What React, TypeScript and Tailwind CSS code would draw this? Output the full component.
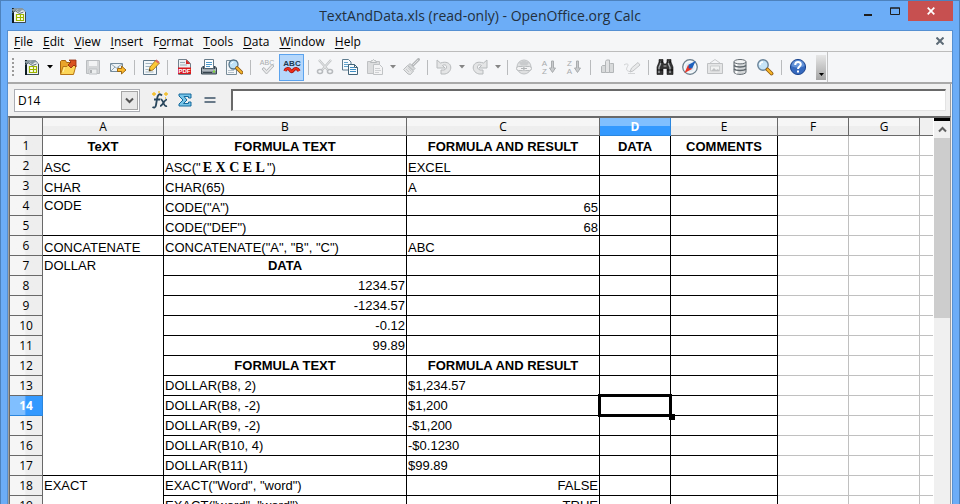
import type { ReactNode } from "react";

type Cell = { text?: ReactNode; align?: string };

type Row = {
  n: number;
  a?: { text: string; span?: number; className?: string };
  b?: Cell;
  c?: Cell;
  d?: Cell;
  e?: Cell;
  low?: boolean;
};

const head = "text-center font-bold";

const rows: Row[] = [
  {
    n: 1,
    a: { text: "TeXT", className: "text-center font-bold align-bottom pt-0" },
    b: { text: "FORMULA TEXT", align: head },
    c: { text: "FORMULA AND RESULT", align: head },
    d: { text: "DATA", align: head },
    e: { text: "COMMENTS", align: head },
  },
  {
    n: 2,
    low: true,
    a: { text: "ASC", className: "align-bottom pt-0 leading-[14px]" },
    b: {
      text: (
        <>
          ASC("<b className="mx-0.5 font-['Liberation_Serif',serif] text-[14px]">E X C E L</b>")
        </>
      ),
    },
    c: { text: "EXCEL" },
  },
  {
    n: 3,
    low: true,
    a: { text: "CHAR", className: "align-bottom pt-0 leading-[14px]" },
    b: { text: "CHAR(65)" },
    c: { text: "A" },
  },
  {
    n: 4,
    low: true,
    a: { text: "CODE", span: 2, className: "align-top pt-0.5" },
    b: { text: 'CODE("A")' },
    c: { text: "65", align: "text-right" },
  },
  { n: 5, low: true, b: { text: 'CODE("DEF")' }, c: { text: "68", align: "text-right" } },
  {
    n: 6,
    low: true,
    a: { text: "CONCATENATE", className: "align-bottom pt-0 leading-[14px]" },
    b: { text: 'CONCATENATE("A", "B", "C")' },
    c: { text: "ABC" },
  },
  { n: 7, a: { text: "DOLLAR", span: 11, className: "align-top pt-0.5" }, b: { text: "DATA", align: head } },
  { n: 8, b: { text: "1234.57", align: "text-right" } },
  { n: 9, b: { text: "-1234.57", align: "text-right" } },
  { n: 10, b: { text: "-0.12", align: "text-right" } },
  { n: 11, b: { text: "99.89", align: "text-right" } },
  { n: 12, b: { text: "FORMULA TEXT", align: head }, c: { text: "FORMULA AND RESULT", align: head } },
  { n: 13, b: { text: "DOLLAR(B8, 2)" }, c: { text: "$1,234.57" } },
  { n: 14, b: { text: "DOLLAR(B8, -2)" }, c: { text: "$1,200" } },
  { n: 15, b: { text: "DOLLAR(B9, -2)" }, c: { text: "-$1,200" } },
  { n: 16, b: { text: "DOLLAR(B10, 4)" }, c: { text: "-$0.1230" } },
  { n: 17, b: { text: "DOLLAR(B11)" }, c: { text: "$99.89" } },
  {
    n: 18,
    a: { text: "EXACT", span: 2, className: "align-top pt-0.5" },
    b: { text: 'EXACT("Word", "word")' },
    c: { text: "FALSE", align: "text-right" },
  },
  { n: 19, b: { text: 'EXACT("word", "word")' }, c: { text: "TRUE", align: "text-right" } },
];

const menus = ["File", "Edit", "View", "Insert", "Format", "Tools", "Data", "Window", "Help"];
const mnemonics: Record<string, number> = { Format: 1 };

const Icon = ({ children }: { children: ReactNode }) => (
  <svg width="18" height="18" viewBox="0 0 18 18" fill="none" aria-hidden="true">
    {children}
  </svg>
);

const CalcIcon = () => (
  <Icon>
    <path d="M3.500 3v13.500h12V6l-3-3.500z" fill="#eef3f5" stroke="#7b8a92" />
    <path d="M15.500 6v10.500H3" stroke="#3a4a54" />
    <path d="M3 2v15" stroke="#0c1a22" strokeWidth="2" />
    <path d="M1.500 3.500l4-1.500 2 1.500L11 2l3.500 2-3 .5-2 2-3-2-3 1.500z" fill="#8b9aa2" />
    <path d="M2 6.500l3.500-1.500 4 2.500 4-1.500" stroke="#5c6c75" />
    <path d="M6.500 8.500h7v6h-7zM10.500 8v7M6 11.500h8" fill="#fffff0" stroke="#9cb400" strokeWidth="1.200" />
  </Icon>
);

const OpenIcon = () => (
  <Icon>
    <path d="M1.500 15.500v-12l1-1h4l1 2h7v11z" fill="#e9a52b" stroke="#a8660f" />
    <path d="M1.500 16.500l2.500-8h4l1-1h8l-2.500 9z" fill="#fcd659" stroke="#b87515" />
    <path d="M4 14l1.500-4.500" stroke="#fff0a8" />
    <path d="M9 7l3-3-2-2h7v7l-2-2-3 3z" fill="#d9531e" stroke="#8e2a0a" strokeWidth=".8" />
  </Icon>
);

const SaveIcon = () => (
  <Icon>
    <path d="M2.500 2.500h13v13h-13z" fill="#d4d6d8" stroke="#b9bcbf" />
    <path d="M5 3h8v5H5z" fill="#f2f3f4" />
    <path d="M5 11h8v5H5z" fill="#eceeef" stroke="#bfc2c5" />
    <path d="M7 12v3" stroke="#aeb1b4" strokeWidth="2" />
  </Icon>
);

const MailIcon = () => (
  <Icon>
    <path d="M1.500 5.500h12v8h-12z" fill="#edf3f7" stroke="#758b9c" />
    <path d="M2 6l5.500 4L13 6M2 13l4-4M13 13l-4-4" stroke="#8a9daa" strokeWidth=".9" />
    <path d="M8.500 10.500h4v-2.500l4.500 4-4.500 4v-2.500h-4z" fill="#fcb82b" stroke="#95610b" strokeWidth=".9" />
  </Icon>
);

const EditIcon = () => (
  <Icon>
    <path d="M1.500 2.500h13v14h-13z" fill="#f4f8fa" stroke="#61798a" />
    <path d="M3.500 5.500h7M3.500 8.500h5M3.500 11.500h3M3.500 14h8" stroke="#a2b5c1" />
    <path d="M7 13l1-4 6-7 3.500 3-6.500 7z" fill="#fbc936" stroke="#936412" strokeWidth=".8" />
    <path d="M13 3l1.500-1.500L17.500 4 16 5.500z" fill="#dc6a61" />
    <path d="M7 13l.5-2 1.500 1.200z" fill="#222" />
  </Icon>
);

const PdfIcon = () => (
  <Icon>
    <path d="M3.500 1.500h8l4 4v11h-12z" fill="#edf1f4" stroke="#71818d" />
    <path d="M11 1.500V6h4.500z" fill="#d22b2b" />
    <path d="M5 4.500h5M5 7h7" stroke="#9cadb8" />
    <path d="M3 9.500h13v6.500H3z" fill="#d81920" />
    <text x="9.500" y="15" textAnchor="middle" fontSize="6" fontWeight="700" fill="#fff" fontFamily="Liberation Sans">
      PDF
    </text>
  </Icon>
);

const PrintIcon = () => (
  <Icon>
    <path d="M4.500 1.500h9v9h-9z" fill="#fff" stroke="#667b89" />
    <path d="M6 4.500h6M6 6.500h6M6 8.500h4" stroke="#4d98c8" />
    <path d="M1.500 10l2-2v3h11V8l2 2v6h-15z" fill="#87919a" stroke="#374650" />
    <path d="M2 12h14" stroke="#d8dee1" />
    <path d="M3 14.500h9" stroke="#37444e" />
    <path d="M13 13.500h2" stroke="#7fdb38" strokeWidth="2" />
  </Icon>
);

const PreviewIcon = () => (
  <Icon>
    <path d="M1.500 2.500h10v14h-10z" fill="#f5f7f9" stroke="#788c99" />
    <path d="M3 12.500h6M3 14.500h6" stroke="#b4c1ca" />
    <circle cx="8.500" cy="6.500" r="4.500" fill="#bee2f8" stroke="#537389" strokeWidth="1.300" />
    <path d="M6 6a3 3 0 012.500-2" stroke="#fff" />
    <path d="M12 10l4.500 4.500" stroke="#8c5912" strokeWidth="3.600" strokeLinecap="round" />
    <path d="M12 10l4.500 4.500" stroke="#f4b52c" strokeWidth="2" strokeLinecap="round" />
  </Icon>
);

const SpellIcon = () => (
  <Icon>
    <text x="9" y="7" textAnchor="middle" fontSize="7" fill="#a9acae" fontFamily="Liberation Sans">
      ABC
    </text>
    <path d="M4 11l2-1.500 2.500 3L14 6.500l2 1.500-7.500 8z" fill="#e6e7e8" stroke="#b4b7ba" />
  </Icon>
);

const AutoSpellIcon = () => (
  <Icon>
    <text x="9" y="8" textAnchor="middle" fontSize="8" fontWeight="700" fill="#203a51" fontFamily="Liberation Sans">
      ABC
    </text>
    <path d="M2 13c1-3 4-3 5-1s2 2 3.500 0 4-2 5.500 1" stroke="#981515" strokeWidth="3.400" />
    <path d="M2 13c1-3 4-3 5-1s2 2 3.500 0 4-2 5.500 1" stroke="#ef2c18" strokeWidth="2" />
  </Icon>
);

const CutIcon = () => (
  <Icon>
    <path d="M3 2l9 10M15 2L6 12" stroke="#c0c3c5" strokeWidth="2.400" />
    <path d="M3 2l9 10M15 2L6 12" stroke="#e7e8e9" />
    <ellipse cx="4" cy="13.500" rx="2.500" ry="2" stroke="#b8bbbe" strokeWidth="1.600" />
    <ellipse cx="14" cy="13.500" rx="2.500" ry="2" stroke="#b8bbbe" strokeWidth="1.600" />
  </Icon>
);

const CopyIcon = () => (
  <Icon>
    <path d="M1.500 1.500h6l2.500 2.500v8H1.500z" fill="#f8fbfd" stroke="#5e7c90" />
    <path d="M3 4.500h4M3 6.500h5M3 8.500h5" stroke="#63a4cd" />
    <path d="M7.500 6.500h6l3 3v7h-9z" fill="#f8fbfd" stroke="#426479" />
    <path d="M9 9.500h4M9 11.500h6M9 13.500h6" stroke="#3f8fc4" />
    <path d="M13.500 6.500v3h3" stroke="#426479" />
  </Icon>
);

const PasteIcon = () => (
  <Icon>
    <path d="M1.500 3.500h12v12h-12z" fill="#dcddde" stroke="#bfc1c3" />
    <path d="M4.500 4.500l1-2h1l1-1 1 1h1l1 2z" fill="#eee" stroke="#b5b8ba" />
    <path d="M7.500 6.500h6l3 3v7h-9z" fill="#f4f4f5" stroke="#c0c3c5" />
    <path d="M9 10.500h5M9 12.500h6M9 14.500h4" stroke="#cfd1d3" />
  </Icon>
);

const BrushIcon = () => (
  <Icon>
    <path d="M16.500 1.500l-6 6" stroke="#b4b7b9" strokeWidth="3" strokeLinecap="round" />
    <path d="M16 2l-5 5" stroke="#e0e1e2" />
    <path d="M8 5.500l5 5-2 2-5-5z" fill="#d6d8d9" stroke="#b9bcbe" />
    <path d="M5.500 7.500l6 5.500-3 3.500-2.500-.5-4.500-4.500z" fill="#e3e4e5" stroke="#b9bcbe" />
    <path d="M4 11l3 3M6 9.500l3.500 4" stroke="#c6c8ca" />
  </Icon>
);

const undoPath = "M2 2v8h8L7.500 7.500c4-2.500 6 3 1.500 4.500H6v4h4c9-2 7.500-15-4.500-11z";

const UndoIcon = () => (
  <Icon>
    <path d={undoPath} fill="#e4e5e6" stroke="#b7babc" />
  </Icon>
);

const RedoIcon = () => (
  <Icon>
    <path d={undoPath} transform="matrix(-1 0 0 1 18 0)" fill="#e4e5e6" stroke="#b7babc" />
  </Icon>
);

const GlobeIcon = () => (
  <Icon>
    <circle cx="9" cy="9" r="7" fill="#dfe0e1" stroke="#bfc2c4" />
    <path d="M4 4.500c3-2 7-2 10 0l-2 3H6zM3 9h3l1 2-2 1z" fill="#c9cbcd" />
    <rect x="1.500" y="8.500" width="8" height="4" rx="2" fill="#f2f2f3" stroke="#babdbf" />
    <rect x="8.500" y="8.500" width="8" height="4" rx="2" fill="#f2f2f3" stroke="#babdbf" />
    <path d="M6 10.500h6" stroke="#b0b3b5" />
  </Icon>
);

const SortIcon = ({ top, bottom }: { top: string; bottom: string }) => (
  <Icon>
    <text x="4.500" y="8" textAnchor="middle" fontSize="8" fill="#a8abad" fontFamily="Liberation Sans">
      {top}
    </text>
    <text x="4.500" y="16" textAnchor="middle" fontSize="8" fill="#a8abad" fontFamily="Liberation Sans">
      {bottom}
    </text>
    <path d="M11.500 3h2v7h2l-3 4.500-3-4.500h2z" fill="#c9cbcd" stroke="#a9acae" />
  </Icon>
);

const ChartIcon = () => (
  <Icon>
    <path d="M3.500 8.500l1-1h3v7h-4z" fill="#d8dadb" stroke="#b3b6b8" />
    <path d="M7.500 3.500l1-1.500h3v12.500h-4z" fill="#e2e3e4" stroke="#b3b6b8" />
    <path d="M11.500 6.500l1-1h3v9h-4z" fill="#d8dadb" stroke="#b3b6b8" />
  </Icon>
);

const DrawIcon = () => (
  <Icon>
    <path d="M1 7c3-2 5-1 3.500 1.500S3 13 7 13.500" stroke="#cfd1d3" />
    <path d="M7 14l1.500-4L15 4.500 17 7l-7 6z" fill="#e9eaeb" stroke="#c3c5c7" />
    <path d="M5 15.500h7" stroke="#d3d5d7" />
  </Icon>
);

const FindIcon = () => (
  <Icon>
    <path d="M3 1.500h4V4l1 2h2l1-2V1.500h4V4l2 5v7.500h-6v-6H7v6H1V9l2-5z" fill="#343434" stroke="#111" strokeWidth=".6" />
    <path d="M4.500 3v3L3 9.500V15M12.500 3v3L14 9.500V15" stroke="#a9adaf" strokeWidth="1.300" />
    <path d="M7.500 8h3" stroke="#888" strokeWidth="1.500" />
    <path d="M1 12h6M11 12h6M3 4h4M11 4h4" stroke="#050505" />
  </Icon>
);

const NavigatorIcon = () => (
  <Icon>
    <circle cx="9" cy="9" r="7.300" fill="#e4edf3" stroke="#6b7d8a" strokeWidth="1.200" />
    <circle cx="9" cy="9" r="5.500" stroke="#fff" />
    <path d="M14.500 3l-3.500 8-4-4z" fill="#1d60bd" />
    <path d="M3.500 15L7 7l4 4z" fill="#e83528" />
    <path d="M15 3L9 11 7 9z" fill="#1d60bd" />
  </Icon>
);

const GalleryIcon = () => (
  <Icon>
    <path d="M4 5l5-3.500L14 5" stroke="#c8cacc" />
    <path d="M1.500 5.500h15v10h-15z" fill="#e4e5e6" stroke="#bfc1c3" />
    <path d="M4.500 8h9v5h-9z" fill="#f1f2f2" stroke="#cbcdce" />
    <path d="M5 13l3-3 2 2 2-1 1.500 2z" fill="#bfc1c3" />
  </Icon>
);

const DatabaseIcon = () => (
  <Icon>
    <path d="M3 4v10.500c2 2.500 10 2.500 12 0V4z" fill="#d4d7d9" stroke="#5e666c" />
    <path d="M5.500 5.500v10" stroke="#fff" strokeWidth="2" />
    <path d="M3 7.500c2 2 10 2 12 0M3 11c2 2 10 2 12 0" stroke="#5e666c" strokeWidth="1.300" />
    <ellipse cx="9" cy="3.700" rx="6" ry="2.200" fill="#f3f4f5" stroke="#636b71" />
  </Icon>
);

const ZoomIcon = () => (
  <Icon>
    <circle cx="7" cy="7" r="5.200" fill="#c6e4f8" stroke="#698399" strokeWidth="1.400" />
    <path d="M4 7a3 3 0 013-3" stroke="#fff" strokeWidth="1.500" />
    <path d="M11.500 11.500l4 4" stroke="#87520c" strokeWidth="3.800" strokeLinecap="round" />
    <path d="M11.500 11.500l4 4" stroke="#f8b62a" strokeWidth="2.200" strokeLinecap="round" />
  </Icon>
);

const HelpIcon = () => (
  <Icon>
    <circle cx="9" cy="9" r="7.600" fill="#3569be" stroke="#1d468f" />
    <path d="M2.500 8a6.500 6 0 0113 0c-4 2-9 2-13 0z" fill="#6493d8" />
    <path d="M6.200 7c0-4 5.800-3.800 5.600-.5C11.700 8.500 9 8.500 9 11M9 12.500v2" stroke="#fff" strokeWidth="2" />
  </Icon>
);

const Tool = ({ label, active, children }: { label: string; active?: boolean; children: ReactNode }) => (
  <button
    type="button"
    aria-label={label}
    className={`flex h-[27px] w-[25px] shrink-0 items-center justify-center ${
      active ? "border border-[#5ba3ee] bg-[#b5d7fb]" : ""
    }`}
  >
    {children}
  </button>
);

const Arrow = ({ label, dark }: { label: string; dark?: boolean }) => (
  <button type="button" aria-label={label} className="flex h-[27px] w-[11px] shrink-0 items-center justify-center">
    <svg width="6" height="4" viewBox="0 0 6 4" aria-hidden="true">
      <path d="M0 0h6L3 3.500z" fill={dark ? "#000" : "#858585"} />
    </svg>
  </button>
);

const Sep = () => (
  <span className="flex w-2 shrink-0 justify-center">
    <span className="h-[15px] w-px bg-[#b9bbbd]" />
  </span>
);

const TitleBar = () => (
  <header className="flex h-[29px] shrink-0 items-start bg-[#6cadf7]">
    <div className="flex w-[140px] items-center pt-[5px] pl-[9px]">
      <CalcIcon />
    </div>
    <h1 className="flex-1 text-center text-[14px] leading-[29px] whitespace-nowrap text-[#23303d]">
      TextAndData.xls (read-only) - OpenOffice.org Calc
    </h1>
    <div className="flex w-[140px] justify-end pr-1.5">
      <button type="button" aria-label="Minimize" className="flex h-[21px] w-7 items-center justify-center">
        <svg width="10" height="10" viewBox="0 0 10 10" aria-hidden="true">
          <path d="M1 7h8v2H1z" fill="#1e1e1e" />
        </svg>
      </button>
      <button type="button" aria-label="Maximize" className="flex h-[20px] w-[26px] items-center justify-center">
        <svg width="10" height="8" viewBox="0 0 10 8" fill="none" aria-hidden="true">
          <path d="M.5 1h9v6.500h-9zM0 1h10" stroke="#1e1e1e" />
        </svg>
      </button>
      <button type="button" aria-label="Close" className="flex h-5 w-[45px] items-center justify-center bg-[#c75050]">
        <svg width="8" height="8" viewBox="0 0 8 8" aria-hidden="true">
          <path d="M.7.7l6.600 6.600M7.300.7L.7 7.300" stroke="#fff" strokeWidth="1.700" />
        </svg>
      </button>
    </div>
  </header>
);

const MenuBar = () => (
  <nav className="flex h-[21px] shrink-0 items-center justify-between border-b border-[#bcbcbc] bg-[#f5f6f7] pr-2 pl-1.5 text-[12px] text-black">
    <div className="flex gap-2.5 pt-px">
      {menus.map((m) => {
        const at = mnemonics[m] ?? 0;
        return (
          <button key={m} type="button" className="leading-5">
            {m.slice(0, at)}
            <span className="underline underline-offset-2">{m[at]}</span>
            {m.slice(at + 1)}
          </button>
        );
      })}
    </div>
    <button type="button" aria-label="Close document">
      <svg width="8" height="8" viewBox="0 0 8 8" aria-hidden="true">
        <path d="M.5.5l7 7M7.500.5l-7 7" stroke="#5d6b76" strokeWidth="2" />
      </svg>
    </button>
  </nav>
);

const Toolbar = () => (
  <div className="flex h-8 shrink-0 border-b-2 border-[#a9a9a9] bg-[#f5f6f8]">
    <div className="flex items-center border-r border-[#c3c3c3]">
      <span className="ml-1 h-[18px] w-0 border-l-2 border-dotted border-[#9b9b9b]" />
      <span className="w-[5px]" />
      <Tool label="New"><CalcIcon /></Tool>
      <Arrow label="New document type" dark />
      <Tool label="Open"><OpenIcon /></Tool>
      <Tool label="Save"><SaveIcon /></Tool>
      <Tool label="Document as E-mail"><MailIcon /></Tool>
      <Sep />
      <Tool label="Edit File"><EditIcon /></Tool>
      <Sep />
      <Tool label="Export as PDF"><PdfIcon /></Tool>
      <Tool label="Print"><PrintIcon /></Tool>
      <Tool label="Page Preview"><PreviewIcon /></Tool>
      <Sep />
      <Tool label="Spellcheck"><SpellIcon /></Tool>
      <Tool label="AutoSpellcheck" active><AutoSpellIcon /></Tool>
      <Sep />
      <Tool label="Cut"><CutIcon /></Tool>
      <Tool label="Copy"><CopyIcon /></Tool>
      <Tool label="Paste"><PasteIcon /></Tool>
      <Arrow label="Paste options" />
      <Tool label="Format Paintbrush"><BrushIcon /></Tool>
      <Sep />
      <Tool label="Undo"><UndoIcon /></Tool>
      <Arrow label="Undo steps" />
      <Tool label="Redo"><RedoIcon /></Tool>
      <Arrow label="Redo steps" />
      <Sep />
      <Tool label="Hyperlink"><GlobeIcon /></Tool>
      <Tool label="Sort Ascending"><SortIcon top="A" bottom="Z" /></Tool>
      <Tool label="Sort Descending"><SortIcon top="Z" bottom="A" /></Tool>
      <Sep />
      <Tool label="Chart"><ChartIcon /></Tool>
      <Tool label="Show Draw Functions"><DrawIcon /></Tool>
      <Sep />
      <Tool label="Find & Replace"><FindIcon /></Tool>
      <Tool label="Navigator"><NavigatorIcon /></Tool>
      <Tool label="Gallery"><GalleryIcon /></Tool>
      <Tool label="Data Sources"><DatabaseIcon /></Tool>
      <Tool label="Zoom"><ZoomIcon /></Tool>
      <Sep />
      <Tool label="Help"><HelpIcon /></Tool>
      <button
        type="button"
        aria-label="Toolbar options"
        className="ml-1.5 mr-px flex h-[25px] w-[10px] items-end justify-center bg-linear-to-b from-[#e6e6e6] to-[#a5a5a5] pb-1"
      >
        <svg width="5" height="3" viewBox="0 0 5 3" aria-hidden="true">
          <path d="M0 0h5L2.500 3z" fill="#000" />
        </svg>
      </button>
    </div>
  </div>
);

const FormulaBar = () => (
  <div className="mr-px flex h-8 shrink-0 items-center border-r border-[#9f9f9f] bg-[#f0f0f0] pr-1 pl-1.5">
    <div className="flex h-[23px] w-[126px] items-center border border-[#abadb3] bg-white p-px">
      <input aria-label="Name Box" defaultValue="D14" className="h-full min-w-0 flex-1 pl-0.5 text-[12px] text-black outline-none" />
      <button
        type="button"
        aria-label="Cell ranges"
        className="flex h-[19px] w-[17px] items-center justify-center border border-[#a5a5a5] bg-[#e8e8e8]"
      >
        <svg width="9" height="7" viewBox="0 0 9 7" fill="none" aria-hidden="true">
          <path d="M1 1.500l3.500 3.500L8 1.500" stroke="#555" strokeWidth="2" />
        </svg>
      </button>
    </div>
    <div className="flex pl-[7px]">
      <Tool label="Function Wizard">
        <Icon>
          <path d="M11 4.500c-3-3-4.500 0-5 3.500l-1 6c-.5 3-2 3-3.500 2M3 8.500h6" stroke="#29475d" strokeWidth="1.800" />
          <path d="M9.500 8.500c3-1 2.500 8 6.500 6.500M16 8.500c-3 0-4 6.500-7 6.500" stroke="#29475d" strokeWidth="1.700" />
          <path d="M3 1v4M1 3h4M8 0v2M15 1v4M13 3h4M14 7h1" stroke="#f3bd23" strokeWidth="1.300" />
        </Icon>
      </Tool>
      <Tool label="Sum">
        <Icon>
          <path d="M3 3h12v4h-2.500V5.500H8L11 9l-3.500 3.500h5V11H15v4H3v-2l4-4-4-4z" fill="#76c4e8" stroke="#14699b" />
        </Icon>
      </Tool>
      <Tool label="Function">
        <Icon>
          <path d="M3.500 7h11M3.500 11h11" stroke="#3c5367" strokeWidth="1.600" />
        </Icon>
      </Tool>
    </div>
    <input
      aria-label="Input line"
      className="ml-[9px] h-[22px] min-w-0 flex-1 border-t-2 border-r border-b border-l-2 border-t-[#696969] border-r-[#e3e3e3] border-b-[#e3e3e3] border-l-[#696969] bg-white outline-none"
    />
  </div>
);

const columns = ["A", "B", "C", "D", "E", "F", "G"];

const Sheet = () => (
  <table className="w-full table-fixed border-separate border-spacing-0 font-['Liberation_Sans',Arial,sans-serif] text-[13px] leading-4 whitespace-nowrap text-black">
    <colgroup>
      <col className="w-[33px]" />
      <col className="w-[121px]" />
      <col className="w-[243px]" />
      <col className="w-[193px]" />
      <col className="w-[71px]" />
      <col className="w-[107px]" />
      <col className="w-[71px]" />
      <col className="w-[71px]" />
      <col />
    </colgroup>
    <thead className="font-['Open_Sans','Noto_Sans',sans-serif] text-[12px]">
      <tr className="h-[18px]">
        <td className="border-r border-b border-[#696969] bg-[#f3f3f3] p-0" />
        {columns.map((c) => (
          <th
            key={c}
            scope="col"
            className={`border-r border-b p-0 ${
              c === "D"
                ? "border-[#2b86dd] bg-linear-to-b from-[#80bfff] from-45% to-[#3399ff] to-50% font-bold text-white"
                : "border-[#696969] bg-linear-to-b from-[#f6f6f6] from-45% to-[#eeeeee] to-50% font-normal"
            }`}
          >
            {c}
          </th>
        ))}
        <td className="border-b border-[#696969] bg-[#f0f0f0] p-0" />
      </tr>
    </thead>
    <tbody>
      {rows.map((r) => {
        const cell = `border-r border-b border-black px-px py-0 ${
          r.low ? "align-bottom leading-[14px]" : r.n === 1 ? "align-bottom" : "align-middle"
        }`;
        const selected = r.n === 14;
        return (
          <tr key={r.n} className="h-5">
            <th
              scope="row"
              className={`border-r border-b p-0 font-['Open_Sans','Noto_Sans',sans-serif] text-[12px] ${
                selected
                  ? "border-[#2b86dd] bg-linear-to-r from-[#80bfff] from-45% to-[#3399ff] to-50% font-bold text-white"
                  : "border-[#696969] bg-linear-to-r from-[#f6f6f6] from-45% to-[#eeeeee] to-50% font-normal"
              }`}
            >
              {r.n}
            </th>
            {r.a && (
              <td rowSpan={r.a.span} className={`border-r border-b border-black px-px pb-0 ${r.a.className}`}>
                {r.a.text}
              </td>
            )}
            <td className={`${cell} ${r.b?.align ?? ""}`}>{r.b?.text}</td>
            <td className={`${cell} ${r.c?.align ?? ""}`}>{r.c?.text}</td>
            <td className={`${cell} ${r.d?.align ?? ""} ${selected ? "relative" : ""}`}>
              {r.d?.text}
              {selected && (
                <>
                  <span className="absolute -inset-[2px] border-[3px] border-black" />
                  <span className="absolute -right-[5px] -bottom-[5px] size-[6px] bg-black" />
                </>
              )}
            </td>
            <td className={`${cell} ${r.e?.align ?? ""}`}>{r.e?.text}</td>
            <td className="border-r border-b border-[#c0c0c0] p-0" />
            <td className="border-r border-b border-[#c0c0c0] p-0" />
            <td className="border-b border-[#c0c0c0] p-0" />
          </tr>
        );
      })}
    </tbody>
  </table>
);

const ScrollBar = () => (
  <div className="flex w-[17px] shrink-0 flex-col border-l border-white bg-[#f0f0f0]">
    <div className="h-[3px] bg-black" />
    <button type="button" aria-label="Scroll up" className="flex h-[17px] items-center justify-center">
      <svg width="9" height="7" viewBox="0 0 9 7" fill="none" aria-hidden="true">
        <path d="M1 5.500L4.500 2 8 5.500" stroke="#606060" strokeWidth="2" />
      </svg>
    </button>
    <div className="h-[180px] bg-[#cdcdcd]" />
  </div>
);

export default function App() {
  return (
    <div className="flex h-screen flex-col overflow-hidden border-x border-t border-[#4d82bd] bg-[#6cadf7] font-['Open_Sans','Noto_Sans',sans-serif]">
      <TitleBar />
      <div className="mx-1.5 flex min-h-0 flex-1 flex-col border-x border-t border-[#5590d2] bg-[#f0f0f0]">
        <MenuBar />
        <Toolbar />
        <FormulaBar />
        <main className="mr-px flex min-h-0 flex-1 border-x border-t-2 border-[#696969] border-x-[#a0a0a0] bg-white">
          <div className="min-w-0 flex-1 overflow-hidden border-l border-[#696969]">
            <Sheet />
          </div>
          <ScrollBar />
        </main>
      </div>
    </div>
  );
}
